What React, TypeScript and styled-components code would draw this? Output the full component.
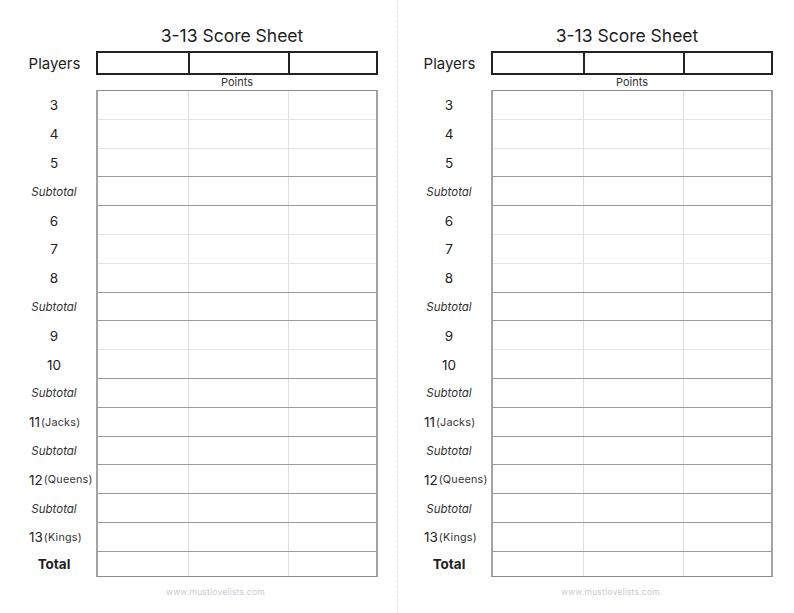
import styled, { createGlobalStyle } from "styled-components";

const GlobalStyle = createGlobalStyle`
  body {
    margin: 0;
    background: #ffffff;
    font-family: Inter, "Noto Sans", sans-serif;
    color: #222222;
  }
`;

const Page = styled.div`
  display: flex;
  width: 794px;
  height: 613px;
  overflow: hidden;
  background: #ffffff;
`;

const Sheet = styled.section<{ $first?: boolean }>`
  box-sizing: border-box;
  width: ${(p) => (p.$first ? "398px" : "396px")};
  height: 613px;
  padding-left: ${(p) => (p.$first ? "12px" : "9px")};
  padding-top: 24px;
  border-right: ${(p) => (p.$first ? "1px dashed #e3e5e8" : "none")};
  display: flex;
  flex-direction: column;
`;

const Title = styled.h1`
  margin: 0 0 3px 74px;
  width: 292px;
  font-size: 17.5px;
  font-weight: 400;
  line-height: 24px;
  text-align: center;
  color: #1e1e1e;
`;

const PlayersRow = styled.div`
  display: flex;
  align-items: center;
  height: 24px;
`;

const LabelCell = styled.div`
  width: 84px;
  display: flex;
  align-items: center;
  justify-content: center;
  flex-shrink: 0;
`;

const PlayersLabel = styled.span`
  font-size: 15px;
  color: #1e1e1e;
  margin-left: 1px;
`;

const PlayerBox = styled.div`
  box-sizing: border-box;
  width: 282px;
  height: 24px;
  border: 2px solid #222;
  display: grid;
  grid-template-columns: 92px 100px 1fr;
`;

const PlayerCell = styled.div`
  border-right: 2px solid #222;
  &:last-child {
    border-right: none;
  }
`;

const Caption = styled.div`
  margin-left: 84px;
  width: 282px;
  height: 15px;
  font-size: 11px;
  line-height: 15px;
  text-align: center;
  color: #333;
`;

const Body = styled.div`
  display: flex;
`;

const LabelColumn = styled.div`
  width: 84px;
  padding-top: 1px;
  display: flex;
  flex-direction: column;
`;

const RowLabel = styled.div<{ $h: number; $left?: boolean }>`
  box-sizing: border-box;
  height: ${(p) => p.$h}px;
  display: flex;
  align-items: center;
  justify-content: ${(p) => (p.$left ? "flex-start" : "center")};
  padding-left: ${(p) => (p.$left ? "17px" : "0")};
  white-space: nowrap;
`;

const Num = styled.span`
  font-size: 13.5px;
  color: #222;
`;

const Suit = styled.span`
  font-size: 10.8px;
  letter-spacing: 0.2px;
  color: #333;
  margin-left: 1px;
`;

const Subtotal = styled.span`
  font-size: 11.5px;
  font-style: italic;
  color: #333;
`;

const TotalLabel = styled.span`
  font-size: 13.5px;
  font-weight: 700;
  color: #1e1e1e;
`;

const Table = styled.div`
  box-sizing: border-box;
  width: 282px;
  border-top: 1px solid #8c8c8c;
  border-bottom: 1px solid #8c8c8c;
  border-left: 2px solid #a3a3a3;
  border-right: 2px solid #a3a3a3;
`;

const TableRow = styled.div<{ $h: number; $strong: boolean; $last?: boolean }>`
  box-sizing: border-box;
  height: ${(p) => p.$h}px;
  display: grid;
  grid-template-columns: 91px 100px 1fr;
  border-bottom: ${(p) =>
    p.$last ? "none" : p.$strong ? "1px solid #9a9a9a" : "1px solid #e2e4e6"};
`;

const Cell = styled.div`
  border-right: 1px solid #dfe1e3;
  &:last-child {
    border-right: none;
  }
`;

const Footer = styled.div`
  margin-top: 10px;
  padding-left: 154px;
  font-size: 8.5px;
  color: #c6ccd4;
  letter-spacing: 0.2px;
`;

type Row = { kind: "num" | "sub" | "total"; n?: string; suit?: string };

const rows: Row[] = [
  { kind: "num", n: "3" },
  { kind: "num", n: "4" },
  { kind: "num", n: "5" },
  { kind: "sub" },
  { kind: "num", n: "6" },
  { kind: "num", n: "7" },
  { kind: "num", n: "8" },
  { kind: "sub" },
  { kind: "num", n: "9" },
  { kind: "num", n: "10" },
  { kind: "sub" },
  { kind: "num", n: "11", suit: "(Jacks)" },
  { kind: "sub" },
  { kind: "num", n: "12", suit: "(Queens)" },
  { kind: "sub" },
  { kind: "num", n: "13", suit: "(Kings)" },
  { kind: "total" },
];

const ROW_H = 28.8;
const TOTAL_H = 24;

const ScoreSheet = ({ first }: { first?: boolean }) => {
  return (
    <Sheet $first={first}>
      <Title>3-13 Score Sheet</Title>
      <PlayersRow>
        <LabelCell>
          <PlayersLabel>Players</PlayersLabel>
        </LabelCell>
        <PlayerBox>
          <PlayerCell />
          <PlayerCell />
          <PlayerCell />
        </PlayerBox>
      </PlayersRow>
      <Caption>Points</Caption>
      <Body>
        <LabelColumn>
          {rows.map((row, i) => (
            <RowLabel
              key={i}
              $h={row.kind === "total" ? TOTAL_H : ROW_H}
              $left={!!row.suit}
            >
              {row.kind === "num" && (
                <>
                  <Num>{row.n}</Num>
                  {row.suit && <Suit>{row.suit}</Suit>}
                </>
              )}
              {row.kind === "sub" && <Subtotal>Subtotal</Subtotal>}
              {row.kind === "total" && <TotalLabel>Total</TotalLabel>}
            </RowLabel>
          ))}
        </LabelColumn>
        <Table>
          {rows.map((row, i) => {
            const next = rows[i + 1];
            const strong =
              row.kind !== "num" || (next !== undefined && next.kind !== "num");
            return (
              <TableRow
                key={i}
                $h={row.kind === "total" ? TOTAL_H : ROW_H}
                $strong={strong}
                $last={row.kind === "total"}
              >
                <Cell />
                <Cell />
                <Cell />
              </TableRow>
            );
          })}
        </Table>
      </Body>
      <Footer>www.mustlovelists.com</Footer>
    </Sheet>
  );
};

export default function App() {
  return (
    <>
      <GlobalStyle />
      <Page>
        <ScoreSheet first />
        <ScoreSheet />
      </Page>
    </>
  );
}
